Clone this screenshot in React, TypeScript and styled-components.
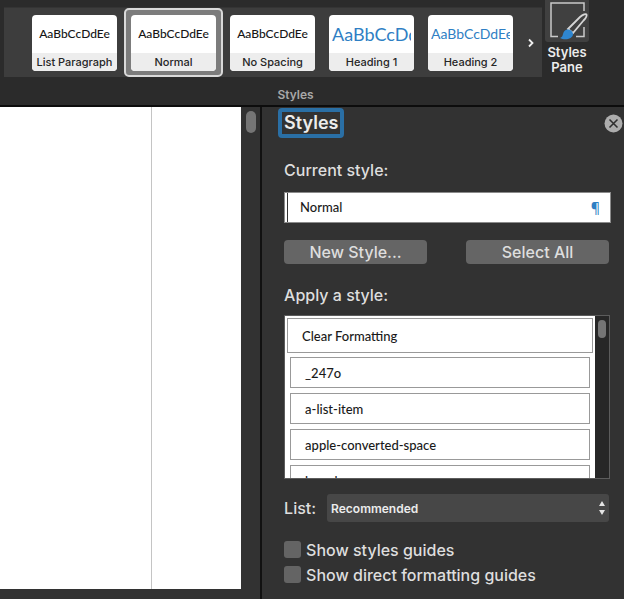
import React from 'react';
import styled, { createGlobalStyle, css } from 'styled-components';

const GlobalStyle = createGlobalStyle`
  * { box-sizing: border-box; }
  html, body, #root { height: 100%; }
  body {
    margin: 0;
    background: #323232;
    color: #dedede;
    font-family: Inter, "Liberation Sans", sans-serif;
    font-size: 16px;
  }
  button, input, select { font: inherit; color: inherit; margin: 0; }
`;

const blue = '#2f7fc4';
const bodyFont = 'Lato, "Liberation Sans", sans-serif';

const Window = styled.div`
  display: flex;
  flex-direction: column;
  height: 100vh;
  overflow: hidden;
`;

const Ribbon = styled.header`
  flex: none;
  background: #2b2b2b;
  border-bottom: 2px solid #0c0c0c;
`;

const RibbonTools = styled.div`
  display: flex;
  align-items: flex-start;
  height: 84px;
  padding-left: 4px;
`;

const Gallery = styled.div`
  display: flex;
  align-items: center;
  margin-top: 7px;
  padding-left: 21px;
  background: #3d3d3d;
  border-top: 1px solid #343434;
`;

const TileFrame = styled.button<{ $selected?: boolean }>`
  flex: none;
  width: 99px;
  height: 69px;
  padding: 4px 5px;
  border: 2px solid transparent;
  border-radius: 5px;
  background: transparent;
  ${(p) => p.$selected && css`
    border-color: #dadada;
    background: #7c7c7c;
  `}
`;

const Tile = styled.span`
  display: flex;
  flex-direction: column;
  height: 56px;
  border-radius: 4px;
  overflow: hidden;
  background: #fff;
`;

const Sample = styled.span<{ $size: number; $heading?: boolean }>`
  flex: 1;
  margin: 0 3px;
  overflow: hidden;
  white-space: nowrap;
  line-height: 38px;
  text-align: ${(p) => (p.$heading ? 'left' : 'center')};
  font-family: ${bodyFont};
  font-weight: ${(p) => (p.$heading ? 400 : 500)};
  font-size: ${(p) => p.$size}px;
  color: ${(p) => (p.$heading ? blue : '#161616')};
`;

const TileName = styled.span`
  flex: none;
  height: 18px;
  line-height: 19px;
  background: #ededed;
  color: #262626;
  font-size: 11px;
  font-weight: 500;
  text-align: center;
  white-space: nowrap;
`;

const More = styled.button`
  display: flex;
  align-items: center;
  justify-content: center;
  width: 22px;
  height: 69px;
  padding: 0;
  border: 0;
  background: transparent;
`;

const PaneButton = styled.button`
  display: flex;
  flex-direction: column;
  align-items: center;
  width: 50px;
  padding: 0;
  border: 0;
  background: transparent;
  color: #ececec;
  font-size: 13px;
  font-weight: 600;
  line-height: 15px;
`;

const PaneIcon = styled.span`
  display: block;
  width: 44px;
  height: 42px;
  margin-bottom: 3px;
  border-radius: 0 0 3px 3px;
  background: #404040;
`;

const GroupName = styled.div`
  height: 21px;
  padding-right: 33px;
  color: #a8a8a8;
  font-size: 12px;
  font-weight: 600;
  line-height: 21px;
  text-align: center;
`;

const Workspace = styled.div`
  flex: 1;
  display: flex;
  min-height: 0;
`;

const DocumentArea = styled.main`
  flex: 1;
  display: flex;
  min-width: 0;
  padding-bottom: 10px;
`;

const Paper = styled.div`
  flex: 1;
  display: flex;
  justify-content: flex-end;
  background: #fff;
`;

const PaperMargin = styled.div`
  width: 90px;
  border-left: 1px solid #c4c4c4;
`;

const DocumentScroll = styled.div`
  width: 19px;
  padding: 4px 4px 0 5px;
`;

const Thumb = styled.div<{ $height: number }>`
  height: ${(p) => p.$height}px;
  border-radius: 5px;
  background: #757575;
`;

const Panel = styled.aside`
  width: calc(58% + 2px);
  padding: 1px 13px 0 22px;
  border-left: 2px solid #111;
`;

const PanelHead = styled.div`
  display: flex;
  align-items: center;
  justify-content: space-between;
  margin: 0 -12px 0 -6px;
`;

const Title = styled.h2`
  margin: 0;
  padding: 0 2px;
  border: 4px solid #2a6fa5;
  border-radius: 4px;
  color: #ececec;
  font-size: 18px;
  font-weight: 600;
  line-height: 22px;
`;

const Close = styled.button`
  display: flex;
  padding: 0;
  border: 0;
  background: transparent;
`;

const Label = styled.label`
  display: block;
  font-weight: 500;
  line-height: 20px;
  white-space: nowrap;
`;

const CurrentLabel = styled(Label)`
  margin: 22px 0 12px;
`;

const CurrentStyle = styled.div`
  display: flex;
  align-items: center;
  height: 31px;
  padding: 0 10px 0 2px;
  border: 1px solid #8b8b8b;
  background: #fff;
  color: #1a1a1a;
`;

const CurrentInput = styled.input`
  flex: 1;
  min-width: 0;
  height: 29px;
  padding: 0 12px 2px;
  border: 0;
  border-left: 1px solid #333;
  background: transparent;
  font-family: ${bodyFont};
  font-size: 13px;
  font-weight: 500;
  outline: none;
`;

const Pilcrow = styled.span`
  color: ${blue};
  font-family: "Open Sans", sans-serif;
  font-size: 14px;
  font-weight: 600;
  line-height: 28px;
`;

const Actions = styled.div`
  display: grid;
  grid-template-columns: 1fr 1fr;
  gap: 39px;
  margin: 17px 2px 21px 0;
`;

const PushButton = styled.button`
  height: 24px;
  padding: 0;
  border: 0;
  border-radius: 4px;
  background: #656565;
  font-weight: 500;
  line-height: 24px;
`;

const ListBox = styled.div`
  display: flex;
  height: 164px;
  margin: 10px 1px 15px 0;
  overflow: hidden;
  border: 1px solid #5c5c5c;
  background: #272727;
`;

const StyleList = styled.ul`
  flex: 1;
  display: flex;
  flex-direction: column;
  gap: 4px;
  margin: 0;
  padding: 2px;
  list-style: none;
  background: #fff;
`;

const StyleRow = styled.li<{ $wide?: boolean }>`
  flex: none;
  padding: ${(p) => (p.$wide ? '0' : '0 3px 1px')};
`;

const StyleChoice = styled.button<{ $wide?: boolean }>`
  display: block;
  width: 100%;
  height: ${(p) => (p.$wide ? 35 : 31)}px;
  padding: 0 14px;
  border: 1px solid #999;
  background: #fff;
  color: #1a1a1a;
  font-family: ${bodyFont};
  font-size: 13px;
  font-weight: 500;
  line-height: 16px;
  text-align: left;
`;

const ListScroll = styled.div`
  width: 14px;
  padding: 4px 3px;
`;

const Filter = styled.div`
  display: flex;
  align-items: center;
  gap: 11px;
  margin: 0 2px 15px 0;
`;

const SelectShell = styled.div`
  flex: 1;
  display: grid;
  align-items: center;
  height: 28px;
  border-radius: 3px;
  background: #474747;
  > * { grid-area: 1 / 1; }
  > svg { justify-self: end; margin-right: 3px; pointer-events: none; }
`;

const Select = styled.select`
  width: 100%;
  height: 28px;
  padding: 0 4px;
  border: 0;
  background: transparent;
  color: #ececec;
  font-size: 12px;
  font-weight: 600;
  appearance: none;
`;

const CheckLabel = styled(Label)`
  display: flex;
  align-items: center;
  gap: 5px;
  height: 25px;
`;

const Checkbox = styled.input`
  width: 17px;
  height: 17px;
  border-radius: 3px;
  background: #646464;
  appearance: none;
`;

const tiles = [
  { name: 'List Paragraph', size: 12 },
  { name: 'Normal', size: 12, selected: true },
  { name: 'No Spacing', size: 12 },
  { name: 'Heading 1', size: 18, heading: true },
  { name: 'Heading 2', size: 14, heading: true },
];

const styleNames = ['Clear Formatting', '_247o', 'a-list-item', 'apple-converted-space', 'b-maker'];

function BrushIcon() {
  return (
    <svg width="44" height="42" viewBox="0 0 44 42" fill="none" aria-hidden="true">
      <path d="M13 36.500H6V3h33v8M39 27v9.500H31" stroke="#c9c9c9" strokeWidth="1.500" />
      <path d="M23 29 35 17c3-2.500 6-3.500 6.500-2.500.5 1.500-1 4-3 6L28 33z" fill="#404040" stroke="#d5d5d5" strokeWidth="1.800" />
      <path d="M15 38c3-1 2.500-3 3.500-5.500 1.500-3.500 6-4 8.500-1 2.500 3.500 0 6.500-4 7.500-3 .7-6 0-8-1z" fill="#2f86cf" />
    </svg>
  );
}

export default function App() {
  return (
    <>
      <GlobalStyle />
      <Window>
        <Ribbon>
          <RibbonTools>
            <Gallery>
              {tiles.map((t) => (
                <TileFrame key={t.name} $selected={t.selected} aria-pressed={!!t.selected}>
                  <Tile>
                    <Sample $size={t.size} $heading={t.heading}>AaBbCcDdEe</Sample>
                    <TileName>{t.name}</TileName>
                  </Tile>
                </TileFrame>
              ))}
              <More aria-label="More styles">
                <svg width="6" height="10" viewBox="0 0 6 10" fill="none">
                  <path d="m1 1.500 3.500 3.500L1 8.500" stroke="#eee" strokeWidth="1.800" />
                </svg>
              </More>
            </Gallery>
            <PaneButton>
              <PaneIcon><BrushIcon /></PaneIcon>
              <span>Styles<br />Pane</span>
            </PaneButton>
          </RibbonTools>
          <GroupName>Styles</GroupName>
        </Ribbon>
        <Workspace>
          <DocumentArea>
            <Paper><PaperMargin /></Paper>
            <DocumentScroll><Thumb $height={22} /></DocumentScroll>
          </DocumentArea>
          <Panel>
            <PanelHead>
              <Title>Styles</Title>
              <Close aria-label="Close">
                <svg width="19" height="19" viewBox="0 0 19 19">
                  <circle cx="9.500" cy="9.500" r="9" fill="#adadad" />
                  <path d="m5.500 5.500 8 8m0-8-8 8" stroke="#303030" strokeWidth="1.600" />
                </svg>
              </Close>
            </PanelHead>
            <CurrentLabel htmlFor="current">Current style:</CurrentLabel>
            <CurrentStyle>
              <CurrentInput id="current" defaultValue="Normal" />
              <Pilcrow>¶</Pilcrow>
            </CurrentStyle>
            <Actions>
              <PushButton>New Style...</PushButton>
              <PushButton>Select All</PushButton>
            </Actions>
            <Label as="div" id="apply">Apply a style:</Label>
            <ListBox>
              <StyleList aria-labelledby="apply">
                {styleNames.map((name, i) => (
                  <StyleRow key={name} $wide={i === 0}>
                    <StyleChoice $wide={i === 0}>{name}</StyleChoice>
                  </StyleRow>
                ))}
              </StyleList>
              <ListScroll><Thumb $height={18} /></ListScroll>
            </ListBox>
            <Filter>
              <Label htmlFor="filter">List:</Label>
              <SelectShell>
                <Select id="filter"><option>Recommended</option></Select>
                <svg width="8" height="16" viewBox="0 0 8 16" fill="#e4e4e4">
                  <path d="M4 1l3 5H1zM4 15l3-5H1z" />
                </svg>
              </SelectShell>
            </Filter>
            <CheckLabel><Checkbox type="checkbox" />Show styles guides</CheckLabel>
            <CheckLabel><Checkbox type="checkbox" />Show direct formatting guides</CheckLabel>
          </Panel>
        </Workspace>
      </Window>
    </>
  );
}
